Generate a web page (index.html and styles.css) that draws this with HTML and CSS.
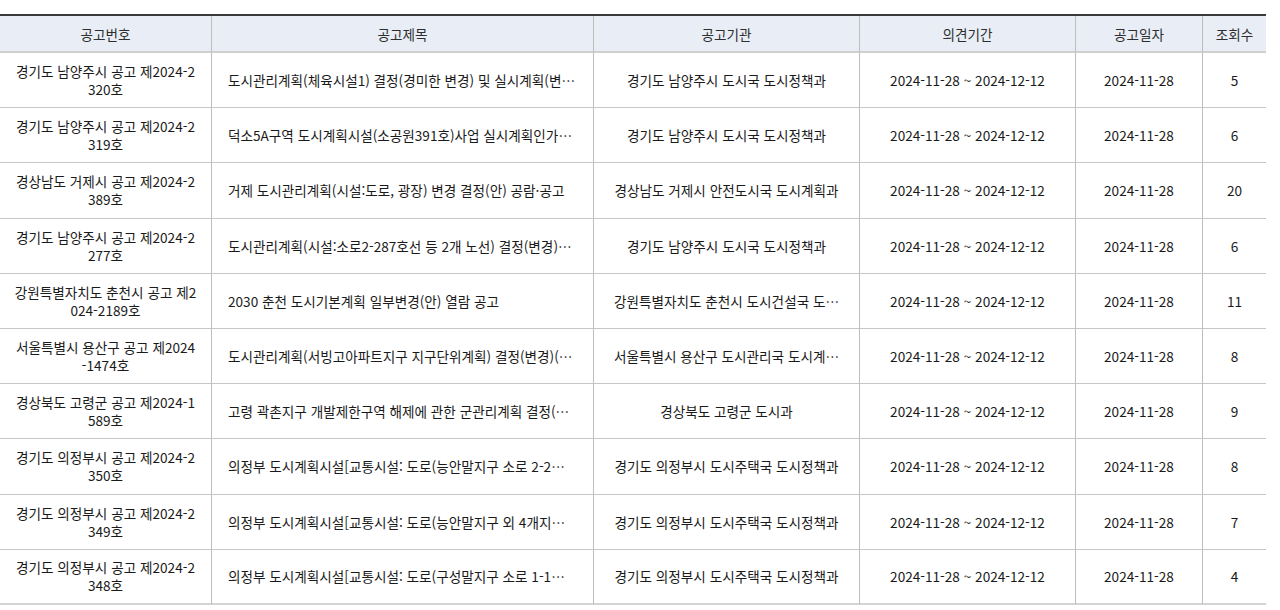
FILE: index.html
```html
<!DOCTYPE html>
<html lang="ko">
<head>
<meta charset="utf-8">
<title>공고 목록</title>
<link rel="stylesheet" href="styles.css">
</head>
<body>
<table class="board">
  <thead>
    <tr>
      <th class="c-no">공고번호</th>
      <th class="c-title">공고제목</th>
      <th class="c-org">공고기관</th>
      <th class="c-period">의견기간</th>
      <th class="c-date">공고일자</th>
      <th class="c-views">조회수</th>
    </tr>
  </thead>
  <tbody>
    <tr>
      <td class="c-no">경기도 남양주시 공고 제2024-2<br>320호</td>
      <td class="c-title"><span class="ellipsis">도시관리계획(체육시설1) 결정(경미한 변경) 및 실시계획(변…</span></td>
      <td class="c-org">경기도 남양주시 도시국 도시정책과</td>
      <td>2024-11-28 ~ 2024-12-12</td>
      <td>2024-11-28</td>
      <td>5</td>
    </tr>
    <tr>
      <td class="c-no">경기도 남양주시 공고 제2024-2<br>319호</td>
      <td class="c-title"><span class="ellipsis">덕소5A구역 도시계획시설(소공원391호)사업 실시계획인가…</span></td>
      <td class="c-org">경기도 남양주시 도시국 도시정책과</td>
      <td>2024-11-28 ~ 2024-12-12</td>
      <td>2024-11-28</td>
      <td>6</td>
    </tr>
    <tr>
      <td class="c-no">경상남도 거제시 공고 제2024-2<br>389호</td>
      <td class="c-title"><span class="ellipsis">거제 도시관리계획(시설:도로, 광장) 변경 결정(안) 공람·공고</span></td>
      <td class="c-org">경상남도 거제시 안전도시국 도시계획과</td>
      <td>2024-11-28 ~ 2024-12-12</td>
      <td>2024-11-28</td>
      <td>20</td>
    </tr>
    <tr>
      <td class="c-no">경기도 남양주시 공고 제2024-2<br>277호</td>
      <td class="c-title"><span class="ellipsis">도시관리계획(시설:소로2-287호선 등 2개 노선) 결정(변경)…</span></td>
      <td class="c-org">경기도 남양주시 도시국 도시정책과</td>
      <td>2024-11-28 ~ 2024-12-12</td>
      <td>2024-11-28</td>
      <td>6</td>
    </tr>
    <tr>
      <td class="c-no">강원특별자치도 춘천시 공고 제2<br>024-2189호</td>
      <td class="c-title"><span class="ellipsis">2030 춘천 도시기본계획 일부변경(안) 열람 공고</span></td>
      <td class="c-org">강원특별자치도 춘천시 도시건설국 도…</td>
      <td>2024-11-28 ~ 2024-12-12</td>
      <td>2024-11-28</td>
      <td>11</td>
    </tr>
    <tr>
      <td class="c-no">서울특별시 용산구 공고 제2024<br>-1474호</td>
      <td class="c-title"><span class="ellipsis">도시관리계획(서빙고아파트지구 지구단위계획) 결정(변경)(…</span></td>
      <td class="c-org">서울특별시 용산구 도시관리국 도시계…</td>
      <td>2024-11-28 ~ 2024-12-12</td>
      <td>2024-11-28</td>
      <td>8</td>
    </tr>
    <tr>
      <td class="c-no">경상북도 고령군 공고 제2024-1<br>589호</td>
      <td class="c-title"><span class="ellipsis">고령 곽촌지구 개발제한구역 해제에 관한 군관리계획 결정(…</span></td>
      <td class="c-org">경상북도 고령군 도시과</td>
      <td>2024-11-28 ~ 2024-12-12</td>
      <td>2024-11-28</td>
      <td>9</td>
    </tr>
    <tr>
      <td class="c-no">경기도 의정부시 공고 제2024-2<br>350호</td>
      <td class="c-title"><span class="ellipsis">의정부 도시계획시설[교통시설: 도로(능안말지구 소로 2-2…</span></td>
      <td class="c-org">경기도 의정부시 도시주택국 도시정책과</td>
      <td>2024-11-28 ~ 2024-12-12</td>
      <td>2024-11-28</td>
      <td>8</td>
    </tr>
    <tr>
      <td class="c-no">경기도 의정부시 공고 제2024-2<br>349호</td>
      <td class="c-title"><span class="ellipsis">의정부 도시계획시설[교통시설: 도로(능안말지구 외 4개지…</span></td>
      <td class="c-org">경기도 의정부시 도시주택국 도시정책과</td>
      <td>2024-11-28 ~ 2024-12-12</td>
      <td>2024-11-28</td>
      <td>7</td>
    </tr>
    <tr>
      <td class="c-no">경기도 의정부시 공고 제2024-2<br>348호</td>
      <td class="c-title"><span class="ellipsis">의정부 도시계획시설[교통시설: 도로(구성말지구 소로 1-1…</span></td>
      <td class="c-org">경기도 의정부시 도시주택국 도시정책과</td>
      <td>2024-11-28 ~ 2024-12-12</td>
      <td>2024-11-28</td>
      <td>4</td>
    </tr>
  </tbody>
</table>
</body>
</html>
```

FILE: styles.css
```css
html, body {
  margin: 0;
  padding: 0;
  background: #ffffff;
}

body {
  font-family: "Noto Sans CJK KR", "Noto Sans", sans-serif;
  font-size: 13.6px;
  color: #1a1a1a;
  overflow: hidden;
}

.board {
  width: 1266px;
  margin-top: 14px;
  border-collapse: separate;
  border-spacing: 0;
  table-layout: fixed;
  border-top: 2px solid #3a3a3a;
}

.board th,
.board td {
  box-sizing: border-box;
  text-align: center;
  vertical-align: middle;
  padding: 0 6px;
  line-height: 18px;
  border-left: 1px solid #bdbdbd;
  font-weight: 400;
}

.board th:first-child,
.board td:first-child {
  border-left: none;
}

.board th {
  height: 37px;
  background: #e9eef6;
  color: #2e2e2e;
  border-bottom: 2px solid #cfcfcf;
}

.board td {
  height: 55.2px;
  border-bottom: 1px solid #c6c6c6;
}

.board tbody tr:last-child td {
  border-bottom: 2px solid #d3d3d3;
}

.c-no { width: 211px; }
.c-title { width: 382px; }
.c-org { width: 266px; }
.c-period { width: 216px; }
.c-date { width: 127px; }
.c-views { width: 64px; }

.board td.c-no {
  padding: 0 4px;
}

.board td.c-title {
  text-align: left;
  padding: 0 8px 0 16px;
}

.board td.c-org {
  white-space: nowrap;
  overflow: hidden;
  text-overflow: ellipsis;
}

.ellipsis {
  display: block;
  white-space: nowrap;
  overflow: hidden;
  text-overflow: ellipsis;
}
```
